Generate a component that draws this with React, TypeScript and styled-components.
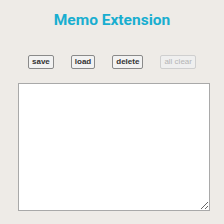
import React, { useState } from 'react';
import styled, { createGlobalStyle } from 'styled-components';

const GlobalStyle = createGlobalStyle`
  html, body {
    margin: 0;
    padding: 0;
    background: #eeebe7;
  }
`;

const Page = styled.div`
  width: 224px;
  height: 224px;
  display: flex;
  flex-direction: column;
  align-items: center;
  font-family: Roboto, "Liberation Sans", sans-serif;
`;

const Title = styled.h1`
  margin: 11px 0 0;
  font-size: 15.5px;
  font-weight: 700;
  line-height: 18px;
  color: #19aed0;
`;

const ButtonRow = styled.div`
  display: flex;
  gap: 17px;
  margin-top: 26px;
`;

const ActionButton = styled.button`
  height: 14px;
  padding: 0 3px;
  font-family: "Liberation Sans", Arial, sans-serif;
  font-size: 8px;
  font-weight: 700;
  line-height: 12px;
  color: #333;
  background: #f2f2f2;
  border: 1px solid #8a8a8a;
  border-radius: 2px;

  &:disabled {
    font-weight: 400;
    color: #b5b5b5;
    border-color: #cfcfcf;
    background: #efefef;
  }
`;

const Memo = styled.textarea`
  width: 192px;
  height: 128px;
  box-sizing: border-box;
  margin: 14px 0 0 4px;
  border: 1px solid #a9a9a9;
  background: #fff;
  resize: both;
`;

const App: React.FC = () => {
  const [text, setText] = useState<string>('');

  return (
    <Page>
      <GlobalStyle />
      <Title>Memo Extension</Title>
      <ButtonRow>
        <ActionButton>save</ActionButton>
        <ActionButton>load</ActionButton>
        <ActionButton>delete</ActionButton>
        <ActionButton disabled={text === ''}>all clear</ActionButton>
      </ButtonRow>
      <Memo value={text} onChange={e => setText(e.target.value)} />
    </Page>
  );
};

export default App;
